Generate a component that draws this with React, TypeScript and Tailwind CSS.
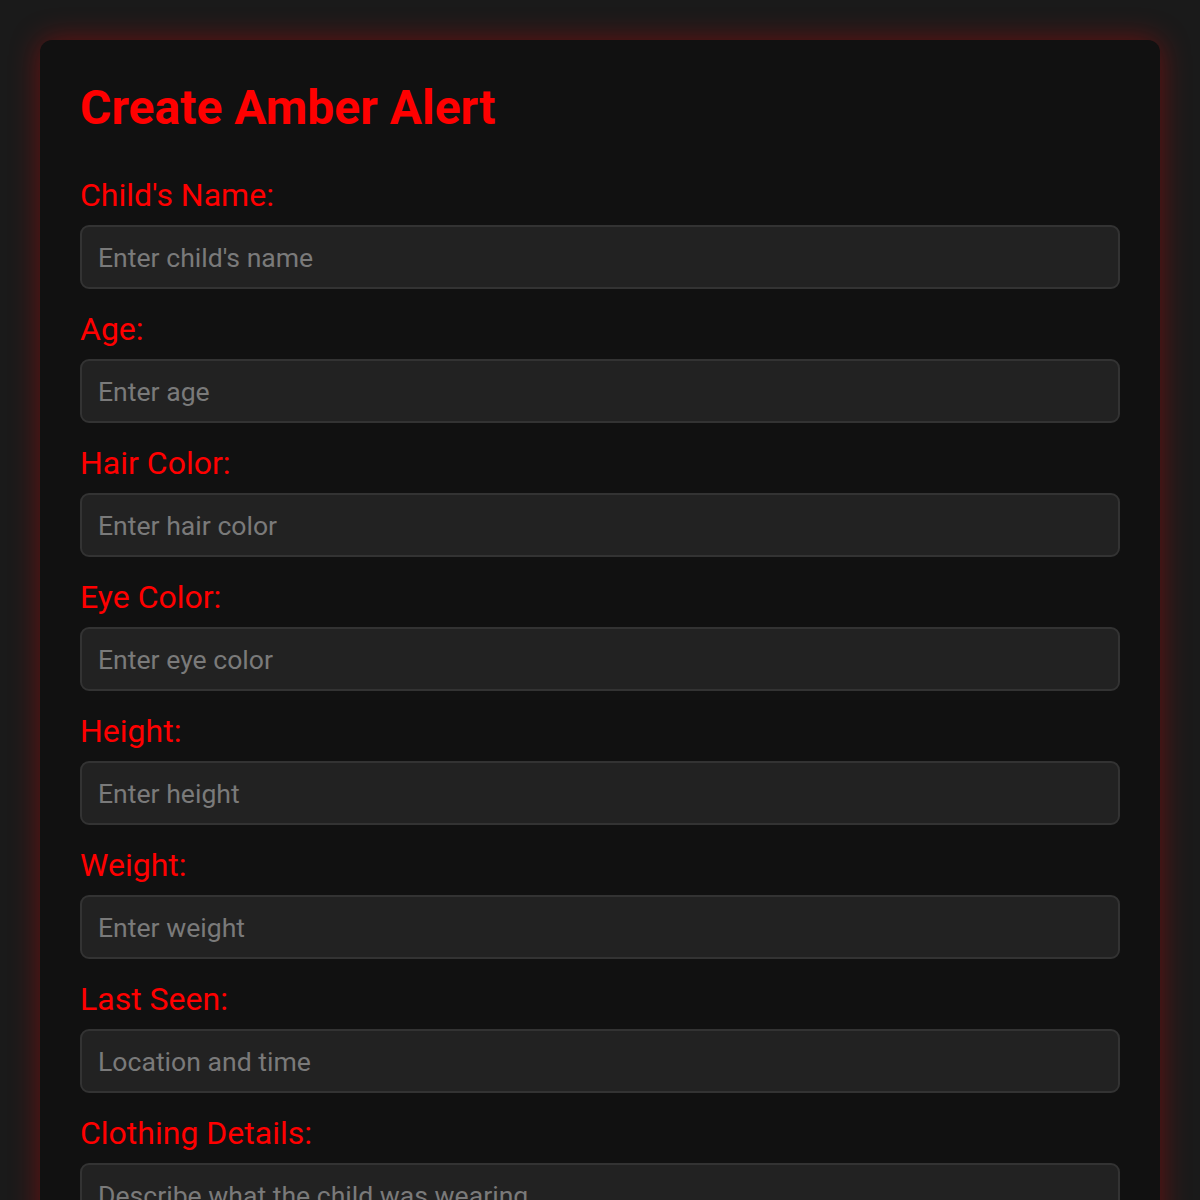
import React from "react";

const fields = [
  { label: "Child's Name:", placeholder: "Enter child's name" },
  { label: "Age:", placeholder: "Enter age" },
  { label: "Hair Color:", placeholder: "Enter hair color" },
  { label: "Eye Color:", placeholder: "Enter eye color" },
  { label: "Height:", placeholder: "Enter height" },
  { label: "Weight:", placeholder: "Enter weight" },
  { label: "Last Seen:", placeholder: "Location and time" },
];

export default function App() {
  return (
    <div
      className="min-h-[1200px] bg-[#1a1a1a] pt-[40px] px-[40px] pb-[40px]"
      style={{ fontFamily: "Roboto, 'Liberation Sans', sans-serif" }}
    >
      <div className="rounded-[12px] bg-[#111111] px-[40px] pt-[32px] pb-[40px] shadow-[0_0_30px_rgba(255,0,0,0.35)]">
        <h1 className="mb-[27px] text-[48px] font-bold leading-normal text-[#ff0000]">
          Create Amber Alert
        </h1>
        <form>
          {fields.map((f) => (
            <div key={f.label}>
              <label className="mb-[6px] block text-[32px] leading-normal text-[#ff0000]">
                {f.label}
              </label>
              <input
                type="text"
                placeholder={f.placeholder}
                className="mb-[16px] box-border block h-[64px] w-full rounded-[9px] border-2 border-[#333333] bg-[#222222] px-[16px] text-[26.6px] text-white placeholder:text-[#7a7a7a] outline-none"
              />
            </div>
          ))}
          <div>
            <label className="mb-[6px] block text-[32px] leading-normal text-[#ff0000]">
              Clothing Details:
            </label>
            <textarea
              placeholder="Describe what the child was wearing"
              className="mb-[16px] box-border block h-[160px] w-full resize-none rounded-[9px] border-2 border-[#333333] bg-[#222222] px-[16px] py-[11px] text-[26.6px] leading-normal text-white placeholder:text-[#7a7a7a] outline-none"
            />
          </div>
        </form>
      </div>
    </div>
  );
}
